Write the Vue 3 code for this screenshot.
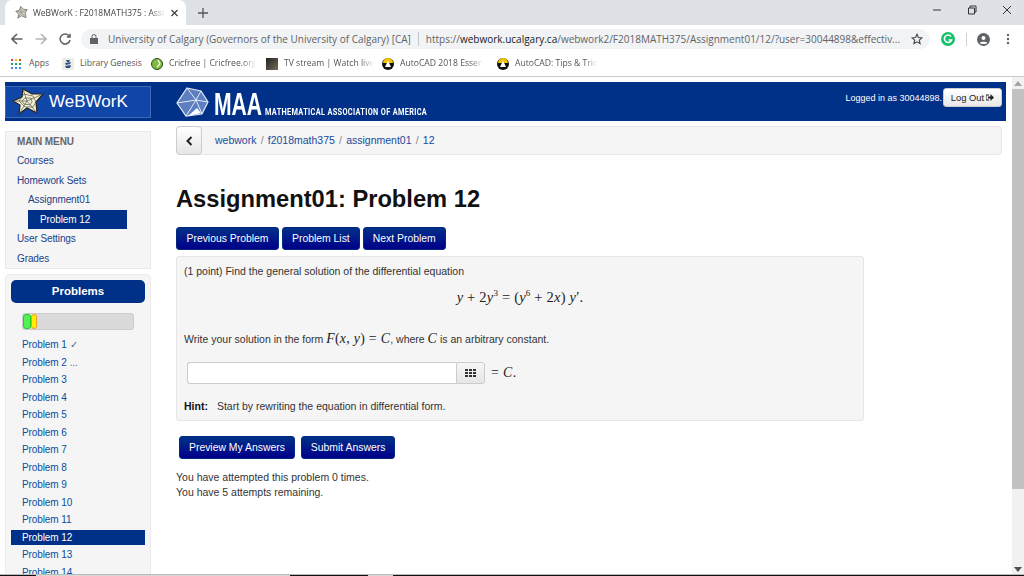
<script setup>
const bookmarks = [
  { label: 'Apps', w: 51, cls: 'apps' },
  { label: 'Library Genesis', w: 89, cls: 'lib' },
  { label: 'Cricfree | Cricfree.org', w: 115, cls: 'cric' },
  { label: 'TV stream | Watch live', w: 116, cls: 'tv' },
  { label: 'AutoCAD 2018 Essen', w: 115, cls: 'cad' },
  { label: 'AutoCAD: Tips & Tric', w: 110, cls: 'cad' }
]
const menu = [
  { label: 'Courses', cls: '' },
  { label: 'Homework Sets', cls: '' },
  { label: 'Assignment01', cls: 'sub' },
  { label: 'Problem 12', cls: 'active' },
  { label: 'User Settings', cls: '' },
  { label: 'Grades', cls: '' }
]
const problems = [
  { label: 'Problem 1', mark: '✓' }, { label: 'Problem 2', mark: '...' },
  ...[3, 4, 5, 6, 7, 8, 9, 10, 11, 12, 13, 14].map((n) => ({ label: 'Problem ' + n, mark: '' }))
]
const crumbs = ['webwork', 'f2018math375', 'assignment01', '12']
const dots = Array.from({ length: 9 })
</script>

<template>
  <div class="screen">
    <div class="tabstrip">
      <div class="tab">
        <svg class="tab-star" width="13" height="13" viewBox="0 0 32 32"><path d="M2 13 11 10 14 1 21 8 30 9 25 17 27 29 16 24 7 30 9 20Z" fill="#cfcdb8" stroke="#777" stroke-width="2"/><path d="M15 15 14 1M15 15 30 9M15 15 27 29M15 15 7 30M15 15 2 13" stroke="#777" stroke-width="1.2"/></svg>
        <span class="tab-title">WeBWorK : F2018MATH375 : Assi</span>
        <svg class="tab-x" width="7" height="8" viewBox="0 0 7 8"><path d="M.5 1 6.500 7M6.500 1 .5 7" stroke="#444" stroke-width="1.3"/></svg>
      </div>
      <svg class="plus" width="10" height="10" viewBox="0 0 10 10"><path d="M5 0V10M0 5H10" stroke="#555" stroke-width="1.3"/></svg>
      <div class="win-controls">
        <svg width="10" height="10" viewBox="0 0 10 10"><path d="M1 5H9" stroke="#333"/></svg>
        <svg width="10" height="10" viewBox="0 0 10 10"><path d="M1.500 3H7.500V9H1.500ZM3 3V1H9V7H7.500" fill="none" stroke="#333"/></svg>
        <svg width="10" height="10" viewBox="0 0 10 10"><path d="M1 1 9 9M9 1 1 9" stroke="#333"/></svg>
      </div>
    </div>

    <div class="toolbar">
      <svg width="12" height="12" viewBox="0 0 12 12"><path d="M11.500 6H1M6 1 1 6 6 11" fill="none" stroke="#5f6368" stroke-width="1.6"/></svg>
      <svg width="12" height="12" viewBox="0 0 12 12"><path d="M.5 6H11M6 1 11 6 6 11" fill="none" stroke="#b3b6ba" stroke-width="1.6"/></svg>
      <svg width="12" height="12" viewBox="0 0 12 12"><path d="M10.300 3.300A5 5 0 1 0 11 7M11 .8V4H7.800" fill="none" stroke="#5f6368" stroke-width="1.5"/></svg>
      <div class="omnibox">
        <svg class="lock" width="8" height="10" viewBox="0 0 8 10"><path d="M0 4H8V10H0Z" fill="#5f6368"/><path d="M2 4V2.500A2 2 0 0 1 6 2.500V4" fill="none" stroke="#5f6368"/></svg>
        <span class="org">University of Calgary (Governors of the University of Calgary) [CA]</span>
        <span class="omni-sep"></span>
        <span class="url">https://<b>webwork.ucalgary.ca</b><i>/webwork2/F2018MATH375/Assignment01/12/?user=30044898&amp;effectiv...</i></span>
        <svg class="star" width="12" height="12" viewBox="0 0 24 24"><path d="M12 2.500 14.900 9 22 9.700 16.600 14.400 18.200 21.400 12 17.700 5.800 21.400 7.400 14.400 2 9.700 9.100 9Z" fill="none" stroke="#444" stroke-width="2.2"/></svg>
      </div>
      <div class="tool-right">
        <svg class="gram" width="14" height="14" viewBox="0 0 14 14"><circle cx="7" cy="7" r="7" fill="#15c26b"/><path d="M10 4.400A3.700 3.700 0 1 0 10.600 8H7.600" fill="none" stroke="#fff" stroke-width="1.6"/></svg>
        <span class="tool-sep"></span>
        <svg class="avatar" width="13" height="13" viewBox="0 0 14 14"><circle cx="7" cy="7" r="7" fill="#5f6368"/><circle cx="7" cy="5.300" r="2.200" fill="#fff"/><path d="M2.800 10.800C4 8.800 10 8.800 11.200 10.800 10 12.200 4 12.200 2.800 10.800Z" fill="#fff"/></svg>
        <svg class="kebab" width="4" height="12" viewBox="0 0 4 12"><g fill="#5f6368"><circle cx="2" cy="2" r="1.200"/><circle cx="2" cy="6" r="1.200"/><circle cx="2" cy="10" r="1.200"/></g></svg>
      </div>
    </div>

    <div class="bookmarks">
      <div v-for="b in bookmarks" :key="b.label" class="bookmark" :style="{ width: b.w + 'px' }">
        <span class="fav" :class="b.cls">
          <template v-if="b.cls === 'apps'"><i v-for="(d, i) in dots" :key="i"></i></template>
          <svg v-else-if="b.cls === 'lib'" width="12" height="12" viewBox="0 0 12 12"><rect width="12" height="12" fill="#eceee6"/><path d="M4 2H8L7 4H5ZM3 5 9 4 8 6 4 7ZM3 8 9 7 8 10H4Z" fill="#2c4f86"/></svg>
          <svg v-else-if="b.cls === 'cric'" width="12" height="12" viewBox="0 0 12 12"><circle cx="6" cy="6" r="5.500" fill="#7dbb3c" stroke="#2e4d1d"/><path d="M7 2 9 6 6 9" fill="none" stroke="#fff" stroke-width="1.2"/></svg>
          <svg v-else-if="b.cls === 'cad'" width="12" height="12" viewBox="0 0 12 12"><circle cx="6" cy="6" r="6" fill="#111"/><path d="M1 5A5 5 0 0 1 11 5Z" fill="#f2c200"/><path d="M6 2.500 9 9H3Z" fill="#fff"/></svg>
        </span>
        <span class="bm-label">{{ b.label }}</span>
      </div>
    </div>

    <div class="viewport">
      <div class="page">
        <header class="banner">
          <div class="brand">
            <svg width="32" height="27" viewBox="0 0 32 27"><path d="M1 13 10 9 11 1 20 6 31 6 24 14 25 25 15 20 7 26 8 17Z" fill="#f4f1cf" stroke="#222" stroke-width="1.2"/><path d="M15 13 11 1M15 13 31 6M15 13 25 25M15 13 7 26M15 13 1 13M7 13 12 6 21 8 24 14 21 19 13 19Z M10 13 13 10 19 10 20 14 18 17 12 16Z" fill="none" stroke="#555" stroke-width=".7"/></svg>
            <span>WeBWorK</span>
          </div>
          <div class="maa">
            <svg width="33" height="31" viewBox="0 0 33 31"><path d="M11 1 25 4 32 15 26 27 10 29 1 16Z" fill="#5d7fc0" stroke="#e3e9f6" stroke-width="1.2"/><path d="M11 1 20 13 32 15M20 13 10 29M20 13 26 27M1 16 20 13M25 4 20 13" fill="none" stroke="#e3e9f6"/><path d="M12 29 25 26 21 21Z" fill="#fff"/></svg>
            <span class="maa-big"><span>MAA</span></span>
            <span class="maa-small"><span>MATHEMATICAL ASSOCIATION OF AMERICA</span></span>
          </div>
          <div class="login">
            <span>Logged in as 30044898.</span>
            <button class="logout">Log Out <svg width="8" height="7" viewBox="0 0 8 7"><path d="M0 1H3M0 1V6H3" fill="none" stroke="#222"/><path d="M2 2.500H4.500V0L8 3.500 4.500 7V4.500H2Z" fill="#222"/></svg></button>
          </div>
        </header>

        <div class="body">
          <aside class="side">
            <nav class="main-menu">
              <div class="menu-head">MAIN MENU</div>
              <a v-for="m in menu" :key="m.label" class="menu-item" :class="m.cls">{{ m.label }}</a>
            </nav>
            <section class="prob-box">
              <div class="prob-head">Problems</div>
              <div class="progress"><i class="p-green"></i><i class="p-yellow"></i></div>
              <a v-for="p in problems" :key="p.label" class="prob-item" :class="{ current: p.label === 'Problem 12' }">{{ p.label }}<span v-if="p.mark" class="mark">{{ p.mark }}</span></a>
            </section>
          </aside>

          <main class="content">
            <div class="crumbbar">
              <button class="back"><svg width="7" height="10" viewBox="0 0 7 10"><path d="M5.500 1 1.500 5 5.500 9" fill="none" stroke="#222" stroke-width="2"/></svg></button>
              <div class="crumbs">
                <template v-for="(c, i) in crumbs" :key="c">
                  <span v-if="i" class="slash">/</span><a>{{ c }}</a>
                </template>
              </div>
            </div>
            <h1>Assignment01: Problem 12</h1>
            <div class="btns">
              <button class="blue first">Previous Problem</button>
              <button class="blue">Problem List</button>
              <button class="blue">Next Problem</button>
            </div>
            <div class="problem">
              <p class="intro">(1 point) Find the general solution of the differential equation</p>
              <div class="equation"><i>y</i> + 2<i>y</i><sup>3</sup> = (<i>y</i><sup>6</sup> + 2<i>x</i>) <i>y</i>′.</div>
              <p class="form">Write your solution in the form <span class="math"><i>F</i>(<i>x</i>, <i>y</i>) = <i>C</i></span>, where <span class="math"><i>C</i></span> is an arbitrary constant.</p>
              <div class="answer">
                <div class="field"></div>
                <div class="addon"><span class="grid"><i v-for="(d, i) in dots" :key="i"></i></span></div>
                <span class="math eqc">= <i>C</i>.</span>
              </div>
              <p class="hint"><b>Hint:</b><span>Start by rewriting the equation in differential form.</span></p>
            </div>
            <div class="btns submit">
              <button class="blue">Preview My Answers</button>
              <button class="blue">Submit Answers</button>
            </div>
            <p class="attempts">You have attempted this problem 0 times.<br>You have 5 attempts remaining.</p>
          </main>
        </div>
      </div>
      <div class="scrollbar">
        <svg width="8" height="5" viewBox="0 0 8 5"><path d="M4 0 8 5H0Z" fill="#a3a3a3"/></svg>
        <div class="thumb"></div>
        <svg class="down" width="8" height="5" viewBox="0 0 8 5"><path d="M4 5 8 0H0Z" fill="#505050"/></svg>
      </div>
    </div>

    <div class="taskbar"><i class="dark s1"></i><i class="light s2"></i><i class="dark s3"></i><i class="light s4"></i><i class="dark s5"></i></div>
  </div>
</template>

<style>
html, body { margin: 0; overflow: hidden; }
</style>

<style scoped>
.screen { width: 1024px; height: 576px; overflow: hidden; display: flex; flex-direction: column; background: #fff; font-family: "Liberation Sans", Arial, sans-serif; position: relative; }
.tabstrip { height: 25px; flex: none; background: #dee1e6; display: flex; align-items: center; }
.tab { width: 181px; height: 25px; margin-left: 5px; background: #fff; border-radius: 7px 7px 0 0; display: flex; align-items: center; box-sizing: border-box; padding-left: 10px; }
.tab-star { flex: none; margin-right: 5px; }
.tab-title { font: 8.500px "Open Sans", sans-serif; color: #444; width: 133px; flex: none; white-space: nowrap; -webkit-mask-image: linear-gradient(90deg, #000 88%, transparent); mask-image: linear-gradient(90deg, #000 88%, transparent); }
.tab-x { margin-left: 5px; flex: none; }
.plus { margin-left: 12px; }
.win-controls { margin-left: auto; margin-top: -5px; display: flex; gap: 25px; padding-right: 12px; }

.toolbar { height: 26px; flex: none; display: flex; align-items: center; box-sizing: border-box; padding: 2px 0 0 11px; gap: 12px; }
.omnibox { width: 849px; height: 20px; margin-left: -2px; background: #f1f3f4; border-radius: 10px; display: flex; align-items: center; box-sizing: border-box; padding-left: 9px; font: 10px "Open Sans", sans-serif; white-space: nowrap; color: #5f6368; position: relative; flex: none; }
.lock { margin-right: 10px; flex: none; }
.omni-sep { width: 1px; height: 14px; background: #c4c7ca; margin: 0 7px; flex: none; }
.url { color: #5f6368; }
.url b { font-weight: 400; color: #202124; }
.url i { font-style: normal; }
.star { position: absolute; right: 7px; top: 4px; }
.tool-right { display: flex; align-items: center; margin-left: -1px; }
.gram { flex: none; }
.tool-sep { width: 1px; height: 13px; background: #cfd2d5; margin: 0 10px 0 11px; flex: none; }
.kebab { margin-left: 16px; flex: none; }
.avatar { flex: none; }

.bookmarks { height: 26px; flex: none; box-sizing: border-box; border-bottom: 1px solid #c9cbce; display: flex; align-items: center; padding-left: 11px; }
.bookmark { display: flex; align-items: center; flex: none; white-space: nowrap; font: 8.600px "Open Sans", sans-serif; color: #555; }
.bm-label { margin-top: -1px; -webkit-mask-image: linear-gradient(90deg, #000 85%, transparent); mask-image: linear-gradient(90deg, #000 85%, transparent); }
.apps + .bm-label, .lib + .bm-label { -webkit-mask-image: none; mask-image: none; }
.fav { width: 12px; height: 12px; margin-right: 6px; flex: none; display: block; }
.fav svg { display: block; }
.fav.apps { display: grid; grid-template-columns: repeat(3, 2px); gap: 2px; width: 10px; height: 10px; margin-right: 8px; }
.fav.apps i { width: 2px; height: 2px; background: #e9453a; }
.fav.apps i:nth-child(3n+2) { background: #f5b400; }
.fav.apps i:nth-child(n+4) { background: #1fa463; }
.fav.apps i:nth-child(n+7) { background: #4285f4; }
.fav.tv { background: linear-gradient(135deg, #222, #7a6a58); }

.viewport { flex: 1; min-height: 0; display: flex; }
.page { flex: 1; min-width: 0; padding: 5px 6px 0 5px; overflow: hidden; }
.banner { height: 39px; background: #003087; display: flex; align-items: center; color: #fff; }
.brand { width: 146px; height: 32px; background: #1046a8; border: 1px solid #3d68b5; box-sizing: border-box; display: flex; align-items: center; padding-left: 6px; gap: 5px; font: 17px "Liberation Sans", sans-serif; flex: none; }
.maa { display: flex; align-items: flex-end; margin-left: 25px; height: 33px; }
.maa-big { display: block; width: 46px; margin-left: 5px; font: bold 32px/28px "Liberation Sans", sans-serif; }
.maa-big span { display: inline-block; transform: scaleX(.66); transform-origin: left; }
.maa-small { display: block; width: 162px; margin-left: 5px; font: bold 8.800px/11px "Roboto", sans-serif; letter-spacing: .4px; white-space: nowrap; }
.maa-small span { display: inline-block; transform: scaleX(.835); transform-origin: left; }
.login { margin-left: auto; margin-right: 4px; display: flex; align-items: center; font-size: 9px; gap: 1px; margin-bottom: 8px; }
.logout { width: 59px; height: 19px; background: linear-gradient(#fff, #e8e8e8); border: 1px solid #ccc; border-radius: 3px; font: 9.400px "Liberation Sans", sans-serif; color: #222; padding: 0; display: flex; align-items: center; justify-content: center; gap: 2px; }

.body { display: flex; margin-top: 10px; }
.side { width: 146px; flex: none; }
.main-menu { height: 138px; box-sizing: border-box; background: #f5f5f5; border: 1px solid #e8e8e8; padding: 3px 0 0 11px; font-size: 10px; letter-spacing: -.1px; }
.menu-head { font-weight: bold; color: #666; height: 16px; line-height: 14px; }
.menu-item { display: block; height: 19.500px; line-height: 19.500px; color: #1c3f85; }
.menu-item.sub { padding-left: 11px; }
.menu-item.active { margin-left: 11px; width: 99px; background: #003087; color: #fff; padding-left: 12px; box-sizing: border-box; }
.prob-box { margin-top: 5px; height: 310px; box-sizing: border-box; background: #f5f5f5; border: 1px solid #ececec; border-radius: 5px; padding: 5px 5px 0; font-size: 10px; letter-spacing: -.1px; }
.prob-head { height: 23px; background: #003087; border-radius: 5px; color: #fff; font: bold 11.500px/23px "Liberation Sans", sans-serif; text-align: center; letter-spacing: 0; }
.progress { width: 112px; height: 17px; margin: 10px 0 6px 11px; background: #dadada; border: 1px solid #ccc; border-radius: 3px; box-sizing: border-box; display: flex; overflow: hidden; }
.progress i { display: block; height: 100%; box-sizing: border-box; border-radius: 3px; }
.p-green { width: 8px; background: #55f055; border: 1px solid #22cc22; }
.p-yellow { width: 6px; background: #ffee00; border: 1px solid #f0a020; }
.prob-item { display: block; height: 17.500px; line-height: 17.500px; padding-left: 11px; color: #0a4da0; white-space: nowrap; }
.prob-item.current { background: #003087; color: #fff; height: 15px; line-height: 15px; margin: 1px 0 1.500px; }
.mark { margin-left: 3px; color: #667; font-weight: 400; }

.content { width: 826px; margin-left: 25px; font-size: 10.500px; color: #333; }
.crumbbar { height: 29px; display: flex; background: #f5f5f5; border: 1px solid #e8e8e8; border-left: 0; border-radius: 4px; box-sizing: border-box; margin-top: -5px; }
.back { width: 26px; height: 29px; margin-top: -1px; background: linear-gradient(#fff, #e6e6e6); border: 1px solid #ccc; border-radius: 4px; padding: 0; display: flex; align-items: center; justify-content: center; flex: none; }
.crumbs { padding-left: 13px; line-height: 27px; color: #1a4a9a; font-size: 10.500px; }
.slash { color: #888; margin: 0 4.200px; }
h1 { margin: 0; font: bold 23.700px/30px "Liberation Sans", sans-serif; color: #111; padding-top: 29px; height: 44px; }
.btns { display: flex; gap: 3px; margin-top: -1px; }
.blue { height: 23px; padding: 0 9px; background: linear-gradient(#003087, #00008b); border: 1px solid #002a80; border-radius: 3px; color: #fff; font: 10.400px "Liberation Sans", sans-serif; white-space: nowrap; }
.blue.first { width: 103px; padding: 0; }
.problem { width: 688px; height: 165px; margin-top: 6px; box-sizing: border-box; background: #f5f5f5; border: 1px solid #e5e5e5; border-radius: 3px; padding: 8px 7px 0; }
p { margin: 0; }
.intro { line-height: 12px; }
.equation { text-align: center; font: 14.500px/16px "Liberation Serif", serif; letter-spacing: .2px; margin-top: 12px; color: #222; }
.equation sup { font-size: 9px; line-height: 0; }
.form { margin-top: 26px; line-height: 14px; }
.math { font: 13.800px "Liberation Serif", serif; color: #222; letter-spacing: .3px; }
.answer { display: flex; align-items: center; margin: 15px 0 0 3px; }
.field { width: 269px; height: 22px; background: #fff; border: 1px solid #ccc; border-right: 0; border-radius: 3px 0 0 3px; box-sizing: border-box; }
.addon { width: 29px; height: 22px; background: linear-gradient(#f6f6f6, #e6e6e6); border: 1px solid #ccc; border-radius: 0 3px 3px 0; box-sizing: border-box; display: flex; align-items: center; justify-content: center; }
.grid { display: grid; grid-template-columns: repeat(3, 3px); gap: 1px; }
.grid i { width: 3px; height: 2px; background: #333; display: block; }
.eqc { margin-left: 6px; letter-spacing: .4px; }
.hint { margin-top: 16px; line-height: 12px; display: flex; gap: 9px; }
.hint b { color: #111; }
.submit { margin-top: 15px; margin-left: 3px; gap: 6px; }
.attempts { margin-top: 11px; line-height: 15px; }

.scrollbar { width: 12px; flex: none; background: #f1f1f1; display: flex; flex-direction: column; align-items: center; padding: 4px 0; box-sizing: border-box; }
.thumb { width: 12px; height: 400px; margin-top: 3px; background: #c1c1c1; }
.down { margin-top: auto; }
.taskbar { position: absolute; left: 0; right: 0; bottom: 0; height: 2px; display: flex; background: #bbb; }
.taskbar i { display: block; height: 1px; margin-top: 1px; }
.taskbar .dark { background: #111; }
.taskbar .light { background: #d8d8d8; }
.s1 { width: 36px; }
.s2 { width: 254px; }
.s3 { width: 78px; }
.s4 { width: 25px; }
.s5 { flex: 1; }
</style>
